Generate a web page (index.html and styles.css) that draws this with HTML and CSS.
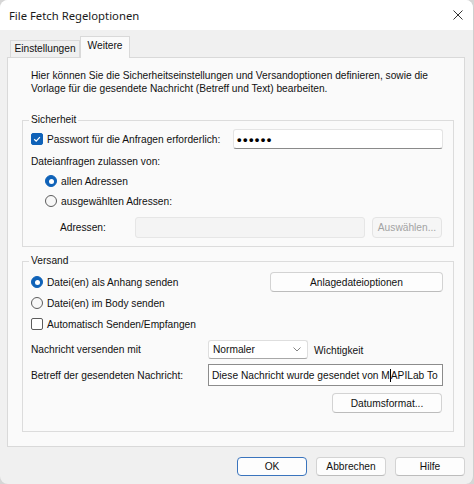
FILE: index.html
```html
<!DOCTYPE html>
<html lang="de">
<head>
<meta charset="utf-8">
<title>File Fetch Regeloptionen</title>
<link rel="stylesheet" href="styles.css">
</head>
<body>
<div class="window">
  <div class="titlebar">
    <span class="title">File Fetch Regeloptionen</span>
    <svg class="close" viewBox="0 0 10 10" aria-hidden="true"><path d="M0.5 0.5 L9.5 9.5 M9.5 0.5 L0.5 9.5" stroke="#333" stroke-width="1" fill="none"/></svg>
  </div>
  <div class="body">
    <div class="tabs">
      <div class="tab">Einstellungen</div>
      <div class="tab active">Weitere</div>
    </div>
    <div class="panel">
      <p class="intro">Hier können Sie die Sicherheitseinstellungen und Versandoptionen definieren, sowie die<br>Vorlage für die gesendete Nachricht (Betreff und Text) bearbeiten.</p>

      <fieldset class="group sec">
        <legend>Sicherheit</legend>
        <div class="row r-pass">
          <span class="check on"><svg viewBox="0 0 10 10"><path d="M2.2 5.2 L4.2 7.1 L7.9 3.1" stroke="#fff" stroke-width="1.2" fill="none"/></svg></span>
          <span>Passwort für die Anfragen erforderlich:</span>
          <div class="field pass">••••••</div>
        </div>
        <div class="row r-head">Dateianfragen zulassen von:</div>
        <div class="row indent"><span class="radio on"></span><span>allen Adressen</span></div>
        <div class="row indent"><span class="radio"></span><span>ausgewählten Adressen:</span></div>
        <div class="row r-addr">
          <span class="addr-label">Adressen:</span>
          <div class="field disabled addr"></div>
          <div class="btn disabled choose">Auswählen...</div>
        </div>
      </fieldset>

      <fieldset class="group ver">
        <legend>Versand</legend>
        <div class="row r-att">
          <span class="radio on"></span><span>Datei(en) als Anhang senden</span>
          <div class="btn attopt">Anlagedateioptionen</div>
        </div>
        <div class="row r-std2"><span class="radio"></span><span>Datei(en) im Body senden</span></div>
        <div class="row r-std2"><span class="check"></span><span>Automatisch Senden/Empfangen</span></div>
        <div class="row r-prio">
          <span class="form-label">Nachricht versenden mit</span>
          <div class="select"><span>Normaler</span><svg class="chev" viewBox="0 0 8 5"><path d="M0.5 0.5 L4 4 L7.5 0.5" stroke="#777" stroke-width="0.9" fill="none"/></svg></div>
          <span class="after">Wichtigkeit</span>
        </div>
        <div class="row r-subj">
          <span class="form-label">Betreff der gesendeten Nachricht:</span>
          <div class="field subject"><span>Diese Nachricht wurde gesendet von M</span><span class="caret"></span><span>APILab To</span></div>
        </div>
        <div class="row r-date">
          <div class="btn datefmt">Datumsformat...</div>
        </div>
      </fieldset>
    </div>
    <div class="footer">
      <div class="btn default">OK</div>
      <div class="btn">Abbrechen</div>
      <div class="btn">Hilfe</div>
    </div>
  </div>
</div>
</body>
</html>
```

FILE: styles.css
```css
* { box-sizing: border-box; }
html, body { margin: 0; padding: 0; }
body {
  width: 474px;
  height: 484px;
  overflow: hidden;
  background: #d6d6d6;
  font-family: "Liberation Sans", Arial, sans-serif;
  font-size: 10.2px;
  color: #111;
}
.window {
  width: 474px;
  height: 484px;
  background: #f0f0f0;
  border-radius: 8px;
  overflow: hidden;
  display: flex;
  flex-direction: column;
  border-right: 1px solid #d0d0d0;
}
.titlebar {
  height: 30px;
  flex: none;
  background: #fff;
  display: flex;
  align-items: center;
  justify-content: space-between;
  padding: 0 10px 0 9px;
}
.title {
  font-family: "Noto Sans", "Open Sans", sans-serif;
  font-size: 11.3px;
  color: #1a1a1a;
}
.close { width: 10px; height: 10px; display: block; }

.body {
  flex: 1;
  display: flex;
  flex-direction: column;
  padding: 6px 8px 0 7px;
}
.tabs {
  display: flex;
  align-items: flex-end;
  height: 22px;
  padding-left: 3px;
  margin-bottom: -1px;
  position: relative;
  z-index: 1;
}
.tab {
  width: 70px;
  height: 17px;
  margin-bottom: 1px;
  border: 1px solid #d9d9d9;
  border-bottom: none;
  background: #f0f0f0;
  line-height: 15px;
  text-align: center;
}
.tab.active {
  width: 50px;
  height: 22px;
  margin-bottom: 0;
  background: #fafafa;
  line-height: 16px;
  padding-top: 1px;
}

.panel {
  height: 390px;
  flex: none;
  background: #fafafa;
  border: 1px solid #d9d9d9;
}
.intro {
  margin: 0;
  padding: 11px 0 0 23px;
  line-height: 13px;
}
.group {
  margin: 18px 10px 0 14px;
  padding: 0 10px 0 8px;
  border: 1px solid #dcdcdc;
  min-width: 0;
}
.group legend {
  padding: 0 2px;
  margin-left: -2px;
  line-height: 14px;
  height: 14px;
}
.sec { padding-bottom: 8px; }
.ver { margin-top: 7px; padding-bottom: 18px; }

.row {
  display: flex;
  align-items: center;
  height: 20px;
}
.r-pass { margin-top: 2px; }
.r-head { margin-top: 2px; }
.indent { padding-left: 14px; }
.r-addr { margin-top: 6px; height: 21px; }
.r-att { margin-top: 4px; }
.r-std2 { margin-top: 1px; }
.r-prio { margin-top: 5px; }
.r-subj { margin-top: 5px; height: 22px; }
.r-date { margin-top: 7px; justify-content: flex-end; padding-right: 1px; }

.check {
  width: 12px;
  height: 12px;
  flex: none;
  border: 1px solid #5c5c5c;
  border-radius: 2px;
  background: #fff;
  margin-right: 4px;
  display: flex;
  align-items: center;
  justify-content: center;
}
.check.on { background: #0f62b8; border-color: #0f62b8; }
.check svg { width: 10px; height: 10px; display: block; }
.radio {
  width: 12px;
  height: 12px;
  flex: none;
  border: 1px solid #5c5c5c;
  border-radius: 50%;
  background: #f7f7f7;
  margin-right: 4px;
  display: flex;
  align-items: center;
  justify-content: center;
}
.radio.on { background: #0f62b8; border-color: #0f62b8; }
.radio.on::after {
  content: "";
  width: 5px;
  height: 5px;
  border-radius: 50%;
  background: #fff;
}

.field {
  background: #fff;
  border: 1px solid #e4e4e4;
  border-bottom-color: #8a8a8a;
  border-radius: 3px;
  height: 100%;
  display: flex;
  align-items: center;
}
.pass {
  width: 210px;
  margin-left: auto;
  padding-left: 3px;
  font-size: 13px;
  font-weight: bold;
  letter-spacing: 1.4px;
  color: #000;
}
.addr-label { width: 104px; padding-left: 29px; flex: none; }
.field.disabled {
  background: #f4f4f4;
  border-color: #e6e6e6;
}
.addr { width: 230px; }
.btn {
  height: 20px;
  background: #fdfdfd;
  border: 1px solid #d3d3d3;
  border-bottom-color: #bcbcbc;
  border-radius: 4px;
  display: flex;
  align-items: center;
  justify-content: center;
  color: #111;
  flex: none;
}
.btn.disabled { color: #a3a3a3; background: #f6f6f6; border-color: #e4e4e4; }
.choose { width: 70px; margin-left: 7px; height: 21px; }
.attopt { width: 173px; margin-left: auto; }
.datefmt { width: 110px; }

.form-label { width: 177px; flex: none; }
.select {
  width: 100px;
  height: 19px;
  background: #fff;
  border: 1px solid #dedede;
  border-bottom-color: #a8a8a8;
  border-radius: 3px;
  display: flex;
  align-items: center;
  justify-content: space-between;
  padding: 0 6px 0 4px;
}
.chev { width: 8px; height: 5px; display: block; }
.after { margin-left: 6px; margin-top: 2px; }
.subject {
  flex: 1;
  border: 1px solid #8c8c8c;
  border-radius: 0;
  padding-left: 3px;
  white-space: nowrap;
  overflow: hidden;
}
.caret {
  width: 1px;
  height: 13px;
  background: #000;
  flex: none;
}

.footer {
  display: flex;
  justify-content: flex-end;
  gap: 9px;
  margin-top: 10px;
}
.footer .btn { width: 70px; height: 19px; }
.btn.default { border: 1px solid #3a74bd; }
```
